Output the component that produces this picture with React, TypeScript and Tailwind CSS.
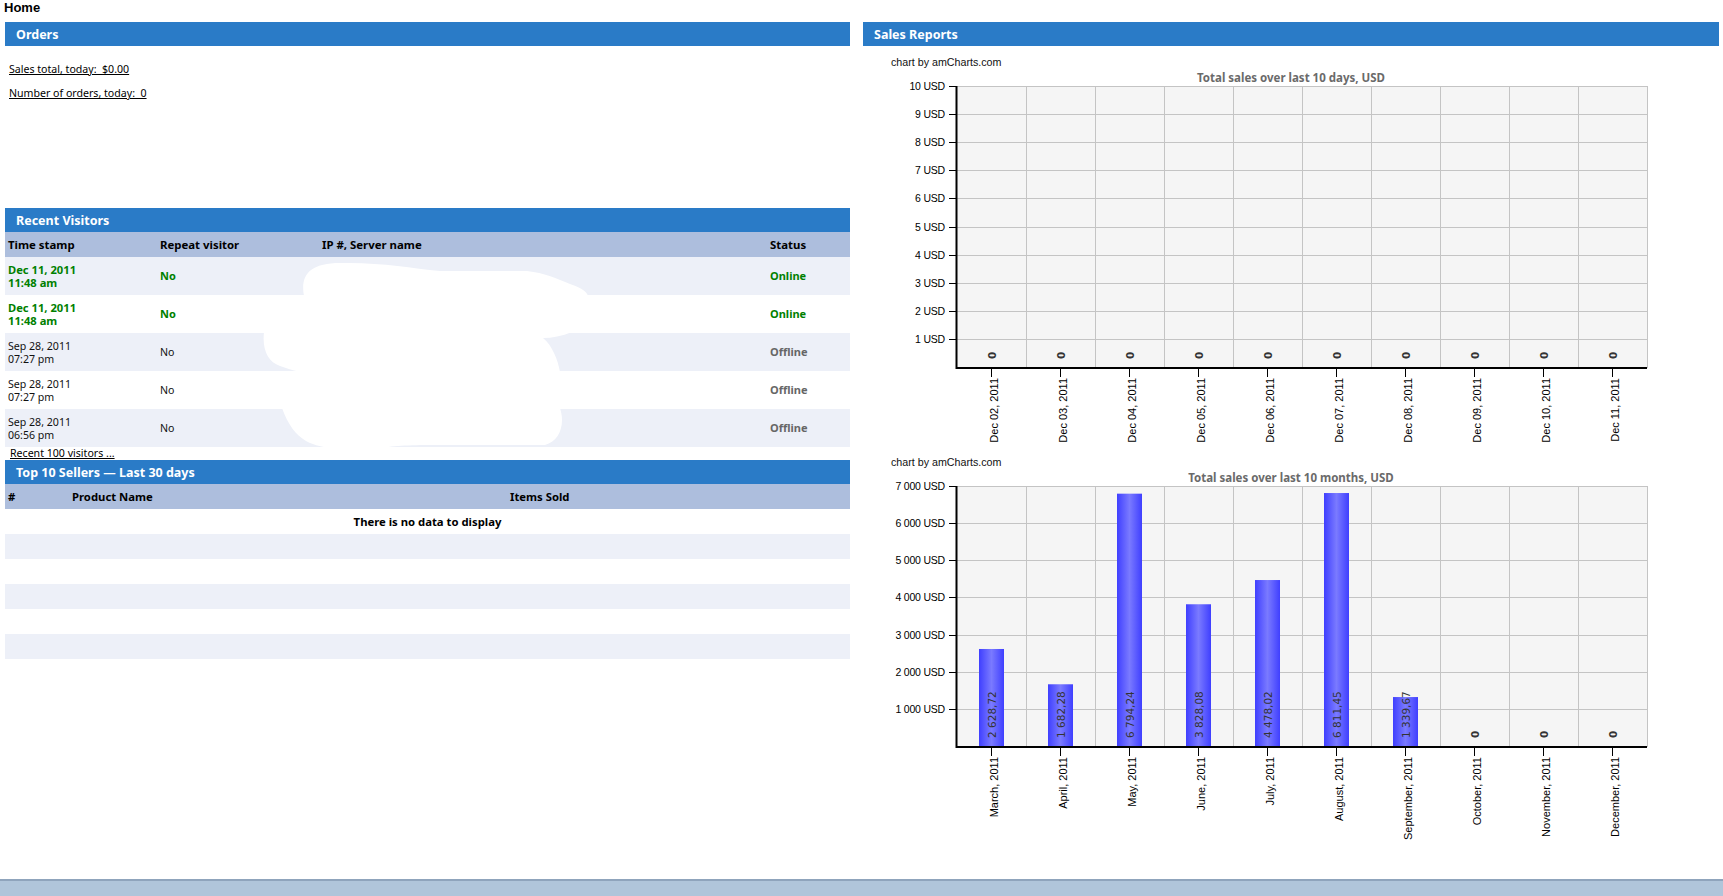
import React from "react";

const uiFont = "font-['Noto_Sans','Liberation_Sans',sans-serif]";
const chartFont = "'Liberation Sans', Arial, sans-serif";

type Visitor = { date: string; time: string; online: boolean };

const visitors: Visitor[] = [
  { date: "Dec 11, 2011", time: "11:48 am", online: true },
  { date: "Dec 11, 2011", time: "11:48 am", online: true },
  { date: "Sep 28, 2011", time: "07:27 pm", online: false },
  { date: "Sep 28, 2011", time: "07:27 pm", online: false },
  { date: "Sep 28, 2011", time: "06:56 pm", online: false },
];

const days = [
  "Dec 02, 2011",
  "Dec 03, 2011",
  "Dec 04, 2011",
  "Dec 05, 2011",
  "Dec 06, 2011",
  "Dec 07, 2011",
  "Dec 08, 2011",
  "Dec 09, 2011",
  "Dec 10, 2011",
  "Dec 11, 2011",
].map((label) => ({ label, value: 0, text: "0" }));

const months = [
  { label: "March, 2011", value: 2628.72, text: "2 628,72" },
  { label: "April, 2011", value: 1682.28, text: "1 682,28" },
  { label: "May, 2011", value: 6794.24, text: "6 794,24" },
  { label: "June, 2011", value: 3828.08, text: "3 828,08" },
  { label: "July, 2011", value: 4478.02, text: "4 478,02" },
  { label: "August, 2011", value: 6811.45, text: "6 811,45" },
  { label: "September, 2011", value: 1339.67, text: "1 339,67" },
  { label: "October, 2011", value: 0, text: "0" },
  { label: "November, 2011", value: 0, text: "0" },
  { label: "December, 2011", value: 0, text: "0" },
];

function SectionBar({ title }: { title: string }) {
  return (
    <div className="h-6 bg-[#2a7bc7] pl-[11px] pt-[2px] flex items-center text-[12.5px] font-bold text-white">
      {title}
    </div>
  );
}

type ChartProps = {
  id: string;
  title: string;
  plotHeight: number;
  max: number;
  step: number;
  tickLabel: (v: number) => string;
  data: { label: string; value: number; text: string }[];
};

function Chart({ id, title, plotHeight, max, step, tickLabel, data }: ChartProps) {
  const left = 94;
  const top = 40;
  const colW = 69;
  const bottom = top + plotHeight;
  const ticks: number[] = [];
  for (let v = step; v <= max; v += step) ticks.push(v);

  return (
    <svg width="856" height="400" viewBox="0 0 856 400" className="block">
      <defs>
        <linearGradient id={id} x1="0" x2="1" y1="0" y2="0">
          <stop offset="0" stopColor="#3f3fff" />
          <stop offset="0.5" stopColor="#7a7aff" />
          <stop offset="1" stopColor="#3f3fff" />
        </linearGradient>
      </defs>
      <text x="28" y="20" fontSize="10.7" fontFamily={chartFont} fill="#111">
        chart by amCharts.com
      </text>
      <text
        x="428"
        y="36"
        textAnchor="middle"
        fontSize="11.5"
        fontWeight="700"
        fontFamily="'Noto Sans', sans-serif"
        fill="#6a6a6a"
      >
        {title}
      </text>
      <rect x={left} y={top} width={colW * 10} height={plotHeight} fill="#f5f5f5" />
      {ticks.map((v) => {
        const y = Math.floor(bottom - (v / max) * plotHeight) + 0.5;
        return (
          <g key={v}>
            <line x1={left} x2={left + colW * 10} y1={y} y2={y} stroke="#c4c4c4" />
            <line x1={left - 8} x2={left} y1={y} y2={y} stroke="#000" />
            <text
              x={left - 12}
              y={y + 3}
              textAnchor="end"
              fontSize="10.5"
              letterSpacing="-0.2"
              fontFamily={chartFont}
              fill="#000"
            >
              {tickLabel(v)}
            </text>
          </g>
        );
      })}
      {data.map((_, i) => (
        <line
          key={i}
          x1={left + colW * (i + 1) + 0.5}
          x2={left + colW * (i + 1) + 0.5}
          y1={top}
          y2={bottom}
          stroke="#c4c4c4"
        />
      ))}
      {data.map((d, i) => {
        const cx = left + colW * i + 34.5;
        const h = (d.value / max) * plotHeight;
        return (
          <g key={d.label}>
            {d.value > 0 && (
              <rect x={cx - 12.5} y={bottom - h} width="25" height={h} fill={`url(#${id})`} />
            )}
            <text
              transform={`translate(${cx + 4} ${bottom - 9}) rotate(-90)`}
              fontSize="10.5"
              fontWeight={d.value > 0 ? 400 : 700}
              fontFamily="'DejaVu Sans', sans-serif"
              fill="#333"
            >
              {d.text}
            </text>
            <line x1={cx} x2={cx} y1={bottom} y2={bottom + 9} stroke="#000" />
            <text
              transform={`translate(${cx + 6} ${bottom + 10}) rotate(-90)`}
              textAnchor="end"
              fontSize="11"
              fontFamily={chartFont}
              fill="#000"
            >
              {d.label}
            </text>
          </g>
        );
      })}
      <line x1={left - 0.5} x2={left - 0.5} y1={top} y2={bottom + 1} stroke="#000" strokeWidth="2" />
      <line x1={left - 1} x2={left + colW * 10} y1={bottom} y2={bottom} stroke="#000" strokeWidth="2" />
    </svg>
  );
}

export default function App() {
  return (
    <div className={`h-[896px] w-[1723px] overflow-hidden bg-white flex flex-col text-black text-[10.6px] ${uiFont}`}>
      <div className="h-[22px] shrink-0 pl-1 text-[13px] font-bold leading-[15px] font-['Liberation_Sans',sans-serif]">
        Home
      </div>

      <div className="flex-1 flex pl-[5px] gap-[13px]">
        {/* Left column */}
        <div className="relative w-[845px]">
          <SectionBar title="Orders" />
          <div className="h-[162px] pl-1 pt-[15px] flex flex-col gap-2">
            <a className="underline h-4 leading-4">Sales total, today:&nbsp; $0.00</a>
            <a className="underline h-4 leading-4">Number of orders, today:&nbsp; 0</a>
          </div>

          <SectionBar title="Recent Visitors" />
          <div className="grid grid-cols-[152px_162px_448px_1fr] h-[25px] items-center pl-[3px] pt-[1px] bg-[#adbedd] font-bold text-[11.4px]">
            <span>Time stamp</span>
            <span>Repeat visitor</span>
            <span>IP #, Server name</span>
            <span>Status</span>
          </div>
          {visitors.map((v, i) => (
            <div
              key={i}
              className={`grid grid-cols-[152px_162px_448px_1fr] h-[38px] items-center pl-[3px] leading-[13px] ${
                i % 2 === 0 ? "bg-[#edf0f8]" : "bg-white"
              } ${v.online ? "text-[#008000] font-bold text-[11.2px]" : "text-[#111] pt-[1px]"}`}
            >
              <span>
                {v.date}
                <br />
                {v.time}
              </span>
              <span className={v.online ? "pb-[2px] text-[11px]" : ""}>No</span>
              <span />
              <span className={v.online ? "pb-[2px] text-[11px]" : "pb-[3px] text-[#666] font-bold text-[11px]"}>
                {v.online ? "Online" : "Offline"}
              </span>
            </div>
          ))}
          <div className="h-[13px] pl-[5px] flex items-center">
            <a className="underline">Recent 100 visitors ...</a>
          </div>

          <SectionBar title="Top 10 Sellers — Last 30 days" />
          <div className="grid grid-cols-[64px_438px_1fr] h-[25px] items-center pl-[3px] pt-[1px] bg-[#adbedd] font-bold text-[11.3px]">
            <span>#</span>
            <span>Product Name</span>
            <span>Items Sold</span>
          </div>
          <div className="h-[25px] pt-[1px] flex items-center justify-center font-bold text-[11.3px]">
            There is no data to display
          </div>
          <div className="h-[25px] bg-[#edf0f8]" />
          <div className="h-[25px]" />
          <div className="h-[25px] bg-[#edf0f8]" />
          <div className="h-[25px]" />
          <div className="h-[25px] bg-[#edf0f8]" />

          {/* hand-painted redaction over the IP column */}
          <svg
            className="absolute left-0 top-0"
            width="845"
            height="440"
            viewBox="5 22 845 440"
            fill="#fff"
          >
            <path d="M304 296 C300 275 310 263 340 263 C380 262 410 268 440 271 L527 271 C545 273 555 278 570 284 C582 288 587 292 588 296 Z" />
            <path d="M264 332 C262 350 268 362 280 366 C288 369 296 371 300 372 L560 372 C558 360 552 345 543 338 C552 338 562 336 572 332 Z" />
            <path d="M282 408 C288 425 296 435 306 441 C315 446 325 447 330 448 L384 448 C395 445 420 445 440 445 L545 445 C556 442 562 432 562 420 C562 415 561 412 560 408 Z" />
          </svg>
        </div>

        {/* Right column */}
        <div className="w-[856px]">
          <SectionBar title="Sales Reports" />
          <Chart
            id="barA"
            title="Total sales over last 10 days, USD"
            plotHeight={282}
            max={10}
            step={1}
            tickLabel={(v) => `${v} USD`}
            data={days}
          />
          <Chart
            id="barB"
            title="Total sales over last 10 months, USD"
            plotHeight={261}
            max={7000}
            step={1000}
            tickLabel={(v) => `${v / 1000} 000 USD`}
            data={months}
          />
        </div>
      </div>

      <div className="h-[17px] shrink-0 bg-[#b0c5da] border-t-2 border-[#8fa4bc]" />
    </div>
  );
}
